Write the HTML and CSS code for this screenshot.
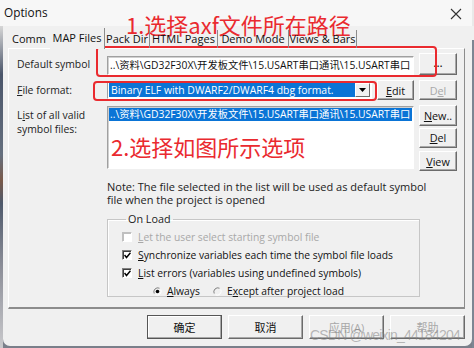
FILE: index.html
```html
<!DOCTYPE html>
<html>
<head>
<meta charset="utf-8">
<title>Options</title>
<link rel="stylesheet" href="styles.css">
</head>
<body>
<div class="screen">
  <div class="titlebar">
    <span class="title">Options</span>
    <svg class="close" width="12" height="12" viewBox="0 0 12 12"><path d="M1 1L11 11M11 1L1 11" stroke="#333" stroke-width="1.1" fill="none"/></svg>
  </div>
  <div class="row">
    <div class="strip-l"></div>
    <div class="dlg">
      <div class="tabs">
        <div class="tab t1">Comm</div>
        <div class="tab t2 sel">MAP Files</div>
        <div class="tab t3">Pack Dir</div>
        <div class="tab t4">HTML Pages</div>
        <div class="tab t5">Demo Mode</div>
        <div class="tab t6">Views &amp; Bars</div>
      </div>
      <div class="panel">
        <div class="grid">
          <div class="lbl l1">Default symbol</div>
          <div class="edit"><span class="clip">..\资料\GD32F30X\开发板文件\15.USART串口通讯\15.USART串口</span></div>
          <div class="btn b-dots">...</div>

          <div class="lbl l2"><u>F</u>ile format:</div>
          <div class="fmt">
            <div class="combo">
              <span class="combo-text">Binary ELF with DWARF2/DWARF4 dbg format.</span>
              <span class="combo-btn"><svg width="7" height="4" viewBox="0 0 7 4"><path d="M0 0H7L3.5 4Z" fill="#000"/></svg></span>
            </div>
            <div class="btn b-edit"><u>E</u>dit</div>
          </div>
          <div class="btn b-del dis">D<u>e</u>l</div>

          <div class="lbl l3">L<u>i</u>st of all valid<br>symbol files:</div>
          <div class="list">
            <div class="list-sel"><span class="clip">..\资料\GD32F30X\开发板文件\15.USART串口通讯\15.USART串口</span></div>
          </div>
          <div class="side">
            <div class="btn b-new"><u>N</u>ew..</div>
            <div class="btn b-del2"><u>D</u>el</div>
            <div class="btn b-view"><u>V</u>iew</div>
          </div>
        </div>
        <div class="lower">
          <p class="note">Note: The file selected in the list will be used as default symbol<br>file when the project is opened</p>
          <fieldset class="group">
            <legend>On Load</legend>
            <div class="opt dis"><span class="chk"></span><span><u>L</u>et the user select starting symbol file</span></div>
            <div class="opt"><span class="chk on"><svg width="7" height="7" viewBox="0 0 7 7"><path d="M0.5 3L2.5 5.5L6.5 0.8" stroke="#000" stroke-width="1.5" fill="none"/></svg></span><span><u>S</u>ynchronize variables each time the symbol file loads</span></div>
            <div class="opt"><span class="chk on"><svg width="7" height="7" viewBox="0 0 7 7"><path d="M0.5 3L2.5 5.5L6.5 0.8" stroke="#000" stroke-width="1.5" fill="none"/></svg></span><span><u>L</u>ist errors (variables using undefined symbols)</span></div>
            <div class="opt radios">
              <span class="radio"><svg width="9" height="9" viewBox="0 0 9 9"><path d="M1.2 6.5A4 4 0 0 1 6.5 1.2" stroke="#808080" fill="none"/><path d="M2.5 7.8A4 4 0 0 0 7.8 2.5" stroke="#fff" fill="none"/><circle cx="4.5" cy="4.5" r="1.8" fill="#000"/></svg></span><span class="rl"><u>A</u>lways</span>
              <span class="radio r2"><svg width="9" height="9" viewBox="0 0 9 9"><path d="M1.2 6.5A4 4 0 0 1 6.5 1.2" stroke="#808080" fill="none"/><path d="M2.5 7.8A4 4 0 0 0 7.8 2.5" stroke="#fff" fill="none"/></svg></span><span class="rl">E<u>x</u>cept after project load</span>
            </div>
          </fieldset>
        </div>
      </div>
      <div class="footer">
        <div class="btn fbtn def">确定</div>
        <div class="btn fbtn">取消</div>
        <div class="btn fbtn dis">应用(A)</div>
        <div class="btn fbtn dis">帮助</div>
      </div>
    </div>
    <div class="strip-r"></div>
  </div>

  <div class="mark m1"></div>
  <div class="mark m2"></div>
  <div class="anno a1">1.选择axf文件所在路径</div>
  <div class="anno a2">2.选择如图所示选项</div>
  <div class="wm">CSDN @weixin_44184204</div>
</div>
</body>
</html>
```

FILE: styles.css
```css
* { box-sizing: border-box; }
html, body { margin: 0; padding: 0; }
body {
  width: 474px; height: 348px; overflow: hidden;
  font-family: "Open Sans", "Noto Sans CJK SC", sans-serif;
  font-size: 10.5px; color: #000;
}
u { text-decoration: underline; text-underline-offset: 1px; }
.screen {
  position: relative; width: 474px; height: 348px;
  background: linear-gradient(#e9e9e9 0 30px, #5f6677 30px 60%, #7a7f8a 60%);
  overflow: hidden;
}
.titlebar {
  height: 26px; width: 472px;
  background: #f7f7f7;
  display: flex; align-items: center; justify-content: space-between;
  padding: 0 10px 2px 4px;
}
.title { font-size: 11.8px; color: #111; }
.close { margin-top: 4px; }
.row { display: flex; height: 322px; }
.strip-l { width: 3px; background: linear-gradient(#d6d6d6, #4b566b 15%, #66707f 40%, #7a5a4a 48%, #4f5a6c 55%, #8d8f99 75%, #c9c9cc); }
.strip-r { width: 2px; background: linear-gradient(#f0f0f0 0 14px, #7d8693 14px); }
.dlg {
  width: 469px; height: 320px;
  background: #f0f0f0;
  border-bottom-left-radius: 7px; border-bottom-right-radius: 7px;
  padding: 2px 7px 0 5px;
  display: flex; flex-direction: column;
}
.tabs { display: flex; height: 20px; align-items: flex-end; position: relative; z-index: 1; }
.tab {
  height: 18px; line-height: 17px; text-align: center; white-space: nowrap;
  font-size: 11px; color: #111;
  border-right: 1px solid #8c8c8c;
}
.tab.sel { height: 21px; line-height: 20px; background: #f0f0f0; margin-bottom: -1px; }
.t1 { width: 42px; border-right: none; }
.t2 { width: 55px; }
.t3 { width: 45px; }
.t4 { width: 68px; }
.t5 { width: 71px; }
.t6 { width: 68px; }
.panel {
  width: 457px; height: 261px;
  border: 1px solid #fff; border-right-color: #8c8c8c; border-bottom: 2px solid #8c8c8c;
  padding: 4px 7px 0 8px;
}
.grid {
  display: grid;
  grid-template-columns: 85px 307px 38px;
  column-gap: 5px;
  grid-template-rows: 22px 20px 66px;
  row-gap: 5px;
}
.lbl { font-size: 10.4px; color: #222; white-space: nowrap; }
.l1, .l2 { display: flex; align-items: center; }
.l3 { line-height: 14px; padding-top: 3px; }
.clip { display: block; white-space: nowrap; overflow: hidden; }
.edit {
  align-self: end; height: 19px;
  background: #fff;
  border: 1px solid; border-color: #a0a0a0 #fff #fff #a0a0a0;
  box-shadow: inset 1px 1px #d0d0d0;
  font-size: 10.3px; line-height: 17px; padding-left: 2px;
  overflow: hidden; color: #111;
}
.btn {
  background: #f0f0f0;
  border: 1px solid; border-color: #fff #6b6b6b #6b6b6b #fff;
  box-shadow: inset -1px -1px #a8a8a8;
  display: flex; align-items: center; justify-content: center;
  font-size: 10.8px; color: #111; white-space: nowrap;
}
.b-dots { font-size: 12px; padding-bottom: 3px; }
.btn.dis { color: #a8a8a8; }
.fmt { display: flex; gap: 5px; }
.combo {
  flex: 1; height: 18px; margin-top: 1px;
  display: flex; background: #fff;
  border: 1px solid; border-color: #a0a0a0 #fff #fff #a0a0a0;
  padding: 1px;
}
.combo-text {
  flex: 1; background: #0a74d6; color: #fff;
  font-size: 10.4px; line-height: 14px; padding-left: 2px; white-space: nowrap; overflow: hidden;
}
.combo-btn {
  width: 15px; background: #f0f0f0;
  border: 1px solid; border-color: #fff #6b6b6b #6b6b6b #fff;
  display: flex; align-items: center; justify-content: center;
}
.b-edit { width: 37px; }
.list {
  height: 63px; margin-top: 1px; background: #fff;
  border: 1px solid; border-color: #a0a0a0 #fff #fff #a0a0a0;
  box-shadow: inset 1px 1px #d0d0d0;
  padding: 1px;
  overflow: hidden;
}
.list-sel {
  background: #0a74d6; color: #fff; height: 13px; line-height: 13px;
  font-size: 10.3px; padding-left: 1px; overflow: hidden;
}
.side { display: flex; flex-direction: column; gap: 2px; }
.b-new, .b-del2 { height: 21px; }
.b-view { height: 20px; margin-top: 1px; }
.lower { padding-left: 90px; padding-top: 9px; }
.note { margin: 0; font-size: 11px; line-height: 13px; color: #222; width: 330px; white-space: nowrap; }
.group {
  margin: 6px 0 0 0; padding: 2px 0 0 14px;
  width: 313px; height: 85px;
  border: 1px solid #c6c6c6; box-shadow: 1px 1px #fff inset;
}
.group legend { font-size: 10.8px; padding: 0 2px; margin-left: 4px; color: #222; line-height: 14px; }
.opt { height: 18px; display: flex; align-items: center; gap: 6px; font-size: 10.3px; color: #111; white-space: nowrap; }
.opt.dis { color: #a8a8a8; }
.chk {
  width: 10px; height: 10px; background: #fff;
  border: 1px solid; border-color: #808080 #fff #fff #808080;
  box-shadow: inset 1px 1px #404040;
  display: flex; align-items: center; justify-content: center; padding: 1px 0 0 1px;
}
.opt.dis .chk { box-shadow: inset 1px 1px #c0c0c0; border-color: #c0c0c0 #fff #fff #c0c0c0; }
.radios { padding-left: 31px; gap: 0; }
.radio { width: 9px; height: 9px; display: flex; margin-right: 5px; }
.r2 { margin-left: 13px; }
.footer {
  display: flex; justify-content: flex-end; gap: 6px;
  padding-top: 6px; padding-right: 0;
}
.fbtn { width: 75px; height: 24px; font-size: 11px; }
.fbtn.def { border: 1px solid #555; box-shadow: inset -1px -1px #a8a8a8, inset 1px 1px #fff; }

.mark {
  position: absolute; border: 2.5px solid #ea2a2f; border-radius: 4px;
}
.m1 { left: 96px; top: 46px; width: 341px; height: 31px; }
.m2 { left: 93px; top: 81px; width: 284px; height: 20px; }
.anno {
  position: absolute; color: #ea2a2f;
  font-family: "Noto Sans CJK SC", sans-serif; font-size: 22px; line-height: 26px;
  white-space: nowrap;
}
.a1 { left: 126px; top: 11px; }
.a2 { left: 111px; top: 133px; }
.wm {
  position: absolute; left: 310px; top: 327px;
  font-family: "Liberation Sans", sans-serif; font-size: 14px;
  color: rgba(130,130,130,0.55); white-space: nowrap; letter-spacing: -0.8px;
}
```
